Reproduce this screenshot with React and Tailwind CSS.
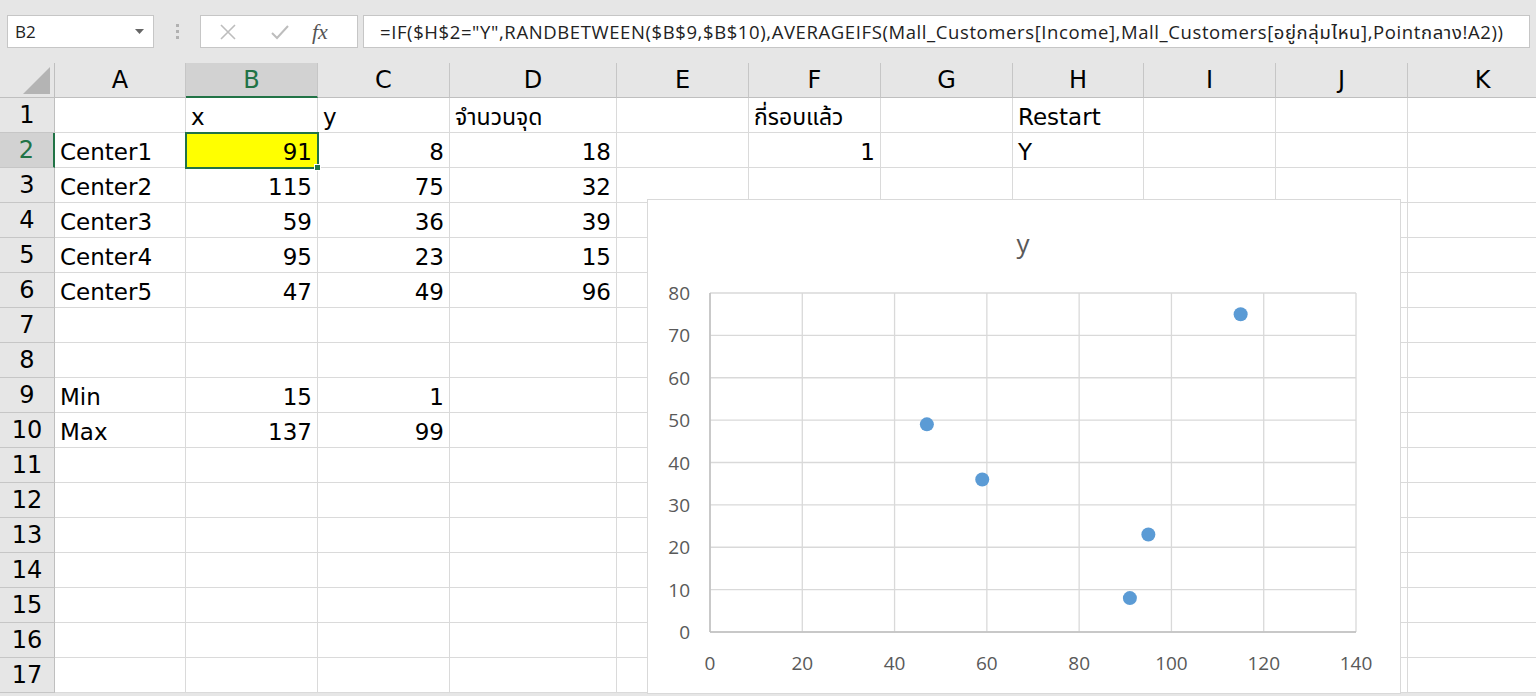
import React from "react";

const COLS = [
  { key: "A", w: 131 },
  { key: "B", w: 132 },
  { key: "C", w: 132 },
  { key: "D", w: 167 },
  { key: "E", w: 132 },
  { key: "F", w: 132 },
  { key: "G", w: 132 },
  { key: "H", w: 131 },
  { key: "I", w: 132 },
  { key: "J", w: 132 },
  { key: "K", w: 150 },
];

// cell values: [text, align]
const DATA = {
  1: { B: ["x"], C: ["y"], D: ["จำนวนจุด"], F: ["กี่รอบแล้ว"], H: ["Restart"] },
  2: { A: ["Center1"], B: ["91", "r"], C: ["8", "r"], D: ["18", "r"], F: ["1", "r"], H: ["Y"] },
  3: { A: ["Center2"], B: ["115", "r"], C: ["75", "r"], D: ["32", "r"] },
  4: { A: ["Center3"], B: ["59", "r"], C: ["36", "r"], D: ["39", "r"] },
  5: { A: ["Center4"], B: ["95", "r"], C: ["23", "r"], D: ["15", "r"] },
  6: { A: ["Center5"], B: ["47", "r"], C: ["49", "r"], D: ["96", "r"] },
  9: { A: ["Min"], B: ["15", "r"], C: ["1", "r"] },
  10: { A: ["Max"], B: ["137", "r"], C: ["99", "r"] },
};

const ROWS = Array.from({ length: 17 }, (_, i) => i + 1);

const POINTS = [
  [91, 8],
  [115, 75],
  [59, 36],
  [95, 23],
  [47, 49],
];

const cellFont = { fontFamily: '"DejaVu Sans", Tahoma, "Noto Sans Thai", "Noto Sans", sans-serif' };
const uiFont = { fontFamily: '"Open Sans", "Noto Sans", "Noto Sans Thai", sans-serif' };

function ScatterChart() {
  const left = 62;
  const top = 93;
  const w = 646;
  const h = 339;
  const px = (v) => left + (v / 140) * w;
  const py = (v) => top + h - (v / 80) * h;
  const xTicks = [0, 20, 40, 60, 80, 100, 120, 140];
  const yTicks = [0, 10, 20, 30, 40, 50, 60, 70, 80];

  return (
    <svg width="753" height="494" className="block" style={uiFont}>
      <text x="375" y="53" textAnchor="middle" fontSize="26" fill="#595959">
        y
      </text>
      {xTicks.map((t) => (
        <line key={"vx" + t} x1={px(t)} x2={px(t)} y1={top} y2={top + h} stroke="#d9d9d9" strokeWidth="1.3" />
      ))}
      {yTicks.map((t) => (
        <line key={"hy" + t} x1={left} x2={left + w} y1={py(t)} y2={py(t)} stroke="#d9d9d9" strokeWidth="1.3" />
      ))}
      <line x1={left} x2={left} y1={top} y2={top + h} stroke="#bfbfbf" strokeWidth="1.5" />
      <line x1={left} x2={left + w} y1={top + h} y2={top + h} stroke="#bfbfbf" strokeWidth="1.5" />
      {yTicks.map((t) => (
        <text key={"ly" + t} x="42" y={py(t) + 7} textAnchor="end" fontSize="19" fill="#595959">
          {t}
        </text>
      ))}
      {xTicks.map((t) => (
        <text key={"lx" + t} x={px(t)} y="470" textAnchor="middle" fontSize="19" fill="#595959">
          {t}
        </text>
      ))}
      {POINTS.map(([x, y], i) => (
        <circle key={i} cx={px(x)} cy={py(y)} r="7" fill="#5b9bd5" />
      ))}
    </svg>
  );
}

function FormulaBar() {
  return (
    <div className="h-[63px] bg-[#e6e6e6] flex items-start pt-[15px] pl-[7px] pr-[6px] gap-0">
      <div className="w-[147px] h-[33px] bg-white border border-[#c6c6c6] flex items-center justify-between pl-[7px] pr-[9px]">
        <span className="text-[17px] text-[#222]" style={uiFont}>
          B2
        </span>
        <svg width="9" height="5" viewBox="0 0 9 5">
          <path d="M0 0 L9 0 L4.5 5 Z" fill="#666" />
        </svg>
      </div>
      <div className="w-[46px] h-[33px] flex flex-col items-center justify-center gap-[3px]">
        <span className="w-[3px] h-[3px] bg-[#b1b1b1]" />
        <span className="w-[3px] h-[3px] bg-[#b1b1b1]" />
        <span className="w-[3px] h-[3px] bg-[#b1b1b1]" />
      </div>
      <div className="w-[158px] h-[33px] bg-white border border-[#c6c6c6] flex items-center">
        <svg width="18" height="18" viewBox="0 0 18 18" className="ml-[18px]">
          <path d="M2 2 L16 16 M16 2 L2 16" stroke="#bdbdbd" strokeWidth="1.6" fill="none" />
        </svg>
        <svg width="20" height="18" viewBox="0 0 20 18" className="ml-[33px]">
          <path d="M2 10 L7 15 L18 3" stroke="#bdbdbd" strokeWidth="2" fill="none" />
        </svg>
        <span
          className="ml-[22px] text-[22px] italic text-[#555]"
          style={{ fontFamily: '"Liberation Serif", "DejaVu Serif", serif' }}
        >
          fx
        </span>
      </div>
      <div className="flex-1 ml-[5px] h-[33px] bg-white border border-[#c6c6c6] flex items-center pl-[16px] overflow-hidden">
        <span className="text-[18.5px] text-[#222] whitespace-nowrap tracking-[0.6px]" style={uiFont}>
          =IF($H$2="Y",RANDBETWEEN($B$9,$B$10),AVERAGEIFS(Mall_Customers[Income],Mall_Customers[อยู่กลุ่มไหน],Pointกลาง!A2))
        </span>
      </div>
    </div>
  );
}

export default function App() {
  const gridCols = "grid-cols-[55px_131px_132px_132px_167px_132px_132px_132px_131px_132px_132px_150px]";

  return (
    <div className="w-[1536px] h-[696px] overflow-hidden bg-[#e6e6e6] relative">
      <FormulaBar />

      <div className={`grid ${gridCols} auto-rows-[35px]`} style={cellFont}>
        {/* header row */}
        <div className="bg-[#e6e6e6] border-r border-b border-[#bfbfbf] relative">
          <svg width="28" height="27" viewBox="0 0 28 27" className="absolute right-[3px] bottom-[3px]">
            <path d="M27 0 L27 27 L0 27 Z" fill="#b4b4b4" />
          </svg>
        </div>
        {COLS.map((c) =>
          c.key === "B" ? (
            <div
              key={c.key}
              className="bg-[#d2d2d2] border-r border-[#c6c6c6] border-b-2 border-b-[#217346] flex items-center justify-center text-[24px] text-[#217346]"
            >
              {c.key}
            </div>
          ) : (
            <div
              key={c.key}
              className="bg-[#e6e6e6] border-r border-b border-[#c6c6c6] border-b-[#bfbfbf] flex items-center justify-center text-[24px] text-black"
            >
              {c.key}
            </div>
          )
        )}

        {ROWS.map((r) => (
          <React.Fragment key={r}>
            {r === 2 ? (
              <div className="bg-[#d2d2d2] border-b border-[#c6c6c6] border-r-2 border-r-[#217346] flex items-center justify-center text-[24px] text-[#217346]">
                {r}
              </div>
            ) : (
              <div className="bg-[#e6e6e6] border-b border-r border-[#c6c6c6] border-r-[#bfbfbf] flex items-center justify-center text-[24px] text-black">
                {r}
              </div>
            )}
            {COLS.map((c) => {
              const v = DATA[r] && DATA[r][c.key];
              const selected = r === 2 && c.key === "B";
              return (
                <div
                  key={c.key}
                  className={
                    "relative border-r border-b border-[#dadada] flex items-center px-[5px] text-[23px] leading-none text-black whitespace-nowrap " +
                    (v && v[1] === "r" ? "justify-end " : "justify-start ") +
                    (selected ? "bg-[#ffff00] outline-2 outline-[#217346] -outline-offset-1 z-10" : "bg-white")
                  }
                >
                  {v ? <span className="pt-[4px]">{v[0]}</span> : null}
                  {selected && (
                    <span className="absolute -right-[4px] -bottom-[4px] w-[7px] h-[7px] bg-[#217346] border border-white" />
                  )}
                </div>
              );
            })}
          </React.Fragment>
        ))}
      </div>

      {/* chart object floating over the sheet */}
      <div className="absolute left-[647px] top-[199px] w-[754px] h-[495px] bg-white border border-[#d9d9d9] z-20">
        <ScatterChart />
      </div>
    </div>
  );
}
